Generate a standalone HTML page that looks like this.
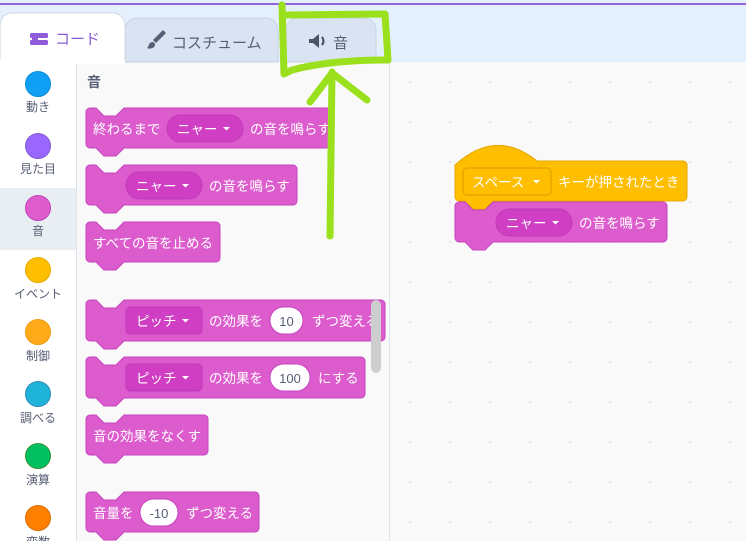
<!DOCTYPE html>
<html><head><meta charset="utf-8"><style>
html,body{margin:0;padding:0;width:746px;height:541px;overflow:hidden;background:#f9f9f9}
svg{display:block}
text{font-family:"Liberation Sans","Noto Sans CJK JP",sans-serif}
</style></head><body>
<svg width="746" height="541" viewBox="0 0 746 541" xmlns="http://www.w3.org/2000/svg">
<defs>
<pattern id="dots" x="390" y="62" width="40" height="40" patternUnits="userSpaceOnUse">
<circle cx="20" cy="20" r="0.9" fill="#d5d5d5"/>
</pattern>
</defs>
<rect x="0" y="0" width="746" height="62" fill="#e5f0fe"/>
<rect x="0" y="3" width="746" height="2" fill="#8f65db"/>
<rect x="390" y="62" width="356" height="479" fill="#f9f9f9"/>
<rect x="390" y="62" width="356" height="479" fill="url(#dots)"/>
<line x1="389.5" y1="62" x2="389.5" y2="541" stroke="#dde3ea"/>
<rect x="77" y="62" width="312" height="479" fill="#f9f9f9"/>
<rect x="0" y="62" width="76" height="479" fill="#ffffff"/>
<rect x="0" y="188" width="76" height="62" fill="#e9eef2"/>
<line x1="76.5" y1="62" x2="76.5" y2="541" stroke="#dde3ea"/>
<path d="M125,62 V30 a12,12 0 0 1 12,-12 H266 a12,12 0 0 1 12,12 V62 Z" fill="#d9e3f2" stroke="#c8d3e2"/>
<path d="M286,62 V30 a12,12 0 0 1 12,-12 H364 a12,12 0 0 1 12,12 V62 Z" fill="#d9e3f2" stroke="#c8d3e2"/>
<path d="M0,62 V25 a12,12 0 0 1 12,-12 H113 a12,12 0 0 1 12,12 V62 Z" fill="#ffffff" stroke="#d0d8e4"/>
<rect x="0" y="60" width="125" height="4" fill="#fff"/>
<g fill="#8e5cd9"><rect x="30" y="33" width="18" height="5" rx="1.5"/><rect x="30" y="40" width="18" height="5" rx="1.5"/><rect x="32" y="36" width="6" height="6"/></g>
<text x="55" y="44" font-size="15" fill="#855cd6">コード</text>
<path d="M163,30 l3,3 l-10,10 l-3,-3 Z" fill="#575e75"/><path d="M152,42 c3,0 4,3 2,5 c-2,2 -6,2 -7,1 c2,-1 1,-5 5,-6Z" fill="#575e75"/>
<text x="172" y="48" font-size="15" fill="#575e75">コスチューム</text>
<path d="M309,39 h4 l6,-5 v14 l-6,-5 h-4 Z" fill="#4d5366"/><path d="M322,37 q3,4 0,8" stroke="#4d5366" stroke-width="2.2" fill="none"/>
<text x="333" y="48" font-size="15" fill="#575e75">音</text>

<g font-size="12" fill="#575e75" text-anchor="middle">
<circle cx="38" cy="84" r="12.5" fill="#0fa0f5" stroke="#0b8ad8"/><text x="38" y="111">動き</text>
<circle cx="38" cy="146" r="12.5" fill="#9966ff" stroke="#855cd6"/><text x="38" y="173">見た目</text>
<circle cx="38" cy="208" r="12.5" fill="#df5ccc" stroke="#bd42bd"/><text x="38" y="235">音</text>
<circle cx="38" cy="270" r="12.5" fill="#ffbf00" stroke="#e6ac00"/><text x="38" y="298">イベント</text>
<circle cx="38" cy="332" r="12.5" fill="#ffab19" stroke="#ec9c13"/><text x="38" y="360">制御</text>
<circle cx="38" cy="394" r="12.5" fill="#1fb3d9" stroke="#2e8eb8"/><text x="38" y="422">調べる</text>
<circle cx="38" cy="456" r="12.5" fill="#00c060" stroke="#389438"/><text x="38" y="484">演算</text>
<circle cx="38" cy="518" r="12.5" fill="#ff8000" stroke="#db6e00"/><text x="38" y="546">変数</text>
</g>

<text x="87" y="87" font-size="14" font-weight="bold" fill="#575e75">音</text>

<g fill="#dc5bcd" stroke="#c644c0" stroke-width="1">
<path d="M86,112 a4,4 0 0 1 4,-4 H96 l8,8 h12 l8,-8 H329 a4,4 0 0 1 4,4 V144 a4,4 0 0 1 -4,4 H124 l-8,8 h-12 l-8,-8 H90 a4,4 0 0 1 -4,-4 Z"/>
<path d="M86,169 a4,4 0 0 1 4,-4 H96 l8,8 h12 l8,-8 H293 a4,4 0 0 1 4,4 V201 a4,4 0 0 1 -4,4 H124 l-8,8 h-12 l-8,-8 H90 a4,4 0 0 1 -4,-4 Z"/>
<path d="M86,226 a4,4 0 0 1 4,-4 H96 l8,8 h12 l8,-8 H216 a4,4 0 0 1 4,4 V258 a4,4 0 0 1 -4,4 H124 l-8,8 h-12 l-8,-8 H90 a4,4 0 0 1 -4,-4 Z"/>
<path d="M86,304 a4,4 0 0 1 4,-4 H96 l8,8 h12 l8,-8 H381 a4,4 0 0 1 4,4 V337 a4,4 0 0 1 -4,4 H124 l-8,8 h-12 l-8,-8 H90 a4,4 0 0 1 -4,-4 Z"/>
<path d="M86,361 a4,4 0 0 1 4,-4 H96 l8,8 h12 l8,-8 H361 a4,4 0 0 1 4,4 V394 a4,4 0 0 1 -4,4 H124 l-8,8 h-12 l-8,-8 H90 a4,4 0 0 1 -4,-4 Z"/>
<path d="M86,419 a4,4 0 0 1 4,-4 H96 l8,8 h12 l8,-8 H204 a4,4 0 0 1 4,4 V451 a4,4 0 0 1 -4,4 H124 l-8,8 h-12 l-8,-8 H90 a4,4 0 0 1 -4,-4 Z"/>
<path d="M86,496 a4,4 0 0 1 4,-4 H96 l8,8 h12 l8,-8 H255 a4,4 0 0 1 4,4 V528 a4,4 0 0 1 -4,4 H124 l-8,8 h-12 l-8,-8 H90 a4,4 0 0 1 -4,-4 Z"/>
</g>
<g fill="#d03fc3" stroke="#c03ab8">
<rect x="167" y="115" width="76" height="27" rx="13.5"/>
<rect x="126" y="172" width="76" height="27" rx="13.5"/>
<rect x="126" y="307" width="76" height="27" rx="4"/>
<rect x="126" y="364" width="76" height="27" rx="4"/>
</g>
<g fill="#fff" stroke="#c644c0">
<rect x="270" y="307" width="33" height="27" rx="13.5"/>
<rect x="270" y="364" width="40" height="27" rx="13.5"/>
<rect x="140" y="499" width="38" height="27" rx="13.5"/>
</g>
<g fill="#fff">
<path d="M223,127 h7 l-3.5,3.5 Z"/><path d="M182,184 h7 l-3.5,3.5 Z"/>
<path d="M182,319 h7 l-3.5,3.5 Z"/><path d="M182,376 h7 l-3.5,3.5 Z"/>
</g>
<g font-size="13.5" fill="#ffffff">
<text x="93" y="134">終わるまで</text><text x="177" y="134">ニャー</text><text x="250" y="134">の音を鳴らす</text>
<text x="136" y="191">ニャー</text><text x="209" y="191">の音を鳴らす</text>
<text x="93" y="248">すべての音を止める</text>
<text x="136" y="326">ピッチ</text><text x="209" y="326">の効果を</text><text x="312" y="326">ずつ変える</text>
<text x="136" y="383">ピッチ</text><text x="209" y="383">の効果を</text><text x="318" y="383">にする</text>
<text x="93" y="441">音の効果をなくす</text>
<text x="93" y="518">音量を</text><text x="186" y="518">ずつ変える</text>
</g>
<g font-size="13" fill="#575e75" text-anchor="middle">
<text x="286.5" y="326">10</text><text x="290" y="383">100</text><text x="159" y="518">-10</text>
</g>
<rect x="371" y="300" width="10" height="73" rx="5" fill="#cecdce"/>

<path d="M455,165 Q496,128 537,161 H683 a4,4 0 0 1 4,4 V197 a4,4 0 0 1 -4,4 H493 l-8,8 h-12 l-8,-8 H459 a4,4 0 0 1 -4,-4 Z" fill="#ffbf00" stroke="#e6a800"/>
<rect x="463" y="168" width="88" height="27" rx="4" fill="#ffbf00" stroke="#d99e00"/>
<path d="M533,180 h7 l-3.5,3.5 Z" fill="#fff"/>
<path d="M455,206 a4,4 0 0 1 4,-4 H465 l8,8 h12 l8,-8 H663 a4,4 0 0 1 4,4 V238 a4,4 0 0 1 -4,4 H493 l-8,8 h-12 l-8,-8 H459 a4,4 0 0 1 -4,-4 Z" fill="#dc5bcd" stroke="#c644c0"/>
<rect x="496" y="209" width="76" height="27" rx="13.5" fill="#d03fc3" stroke="#c03ab8"/>
<path d="M552,221 h7 l-3.5,3.5 Z" fill="#fff"/>
<g font-size="13.5" fill="#fff">
<text x="472" y="187">スペース</text><text x="558" y="187">キーが押されたとき</text>
<text x="506" y="228">ニャー</text><text x="579" y="228">の音を鳴らす</text>
</g>

<g fill="none" stroke="#9be01c" stroke-width="7" stroke-linecap="round" stroke-linejoin="round">
<path d="M282,5 L284,74 L292,70 Q330,60 388,60 L385,14 L287,15"/>
<path d="M330,236 L332,72"/>
<path d="M310,102 L332,73 L367,100"/>
</g>
</svg>
</body></html>
